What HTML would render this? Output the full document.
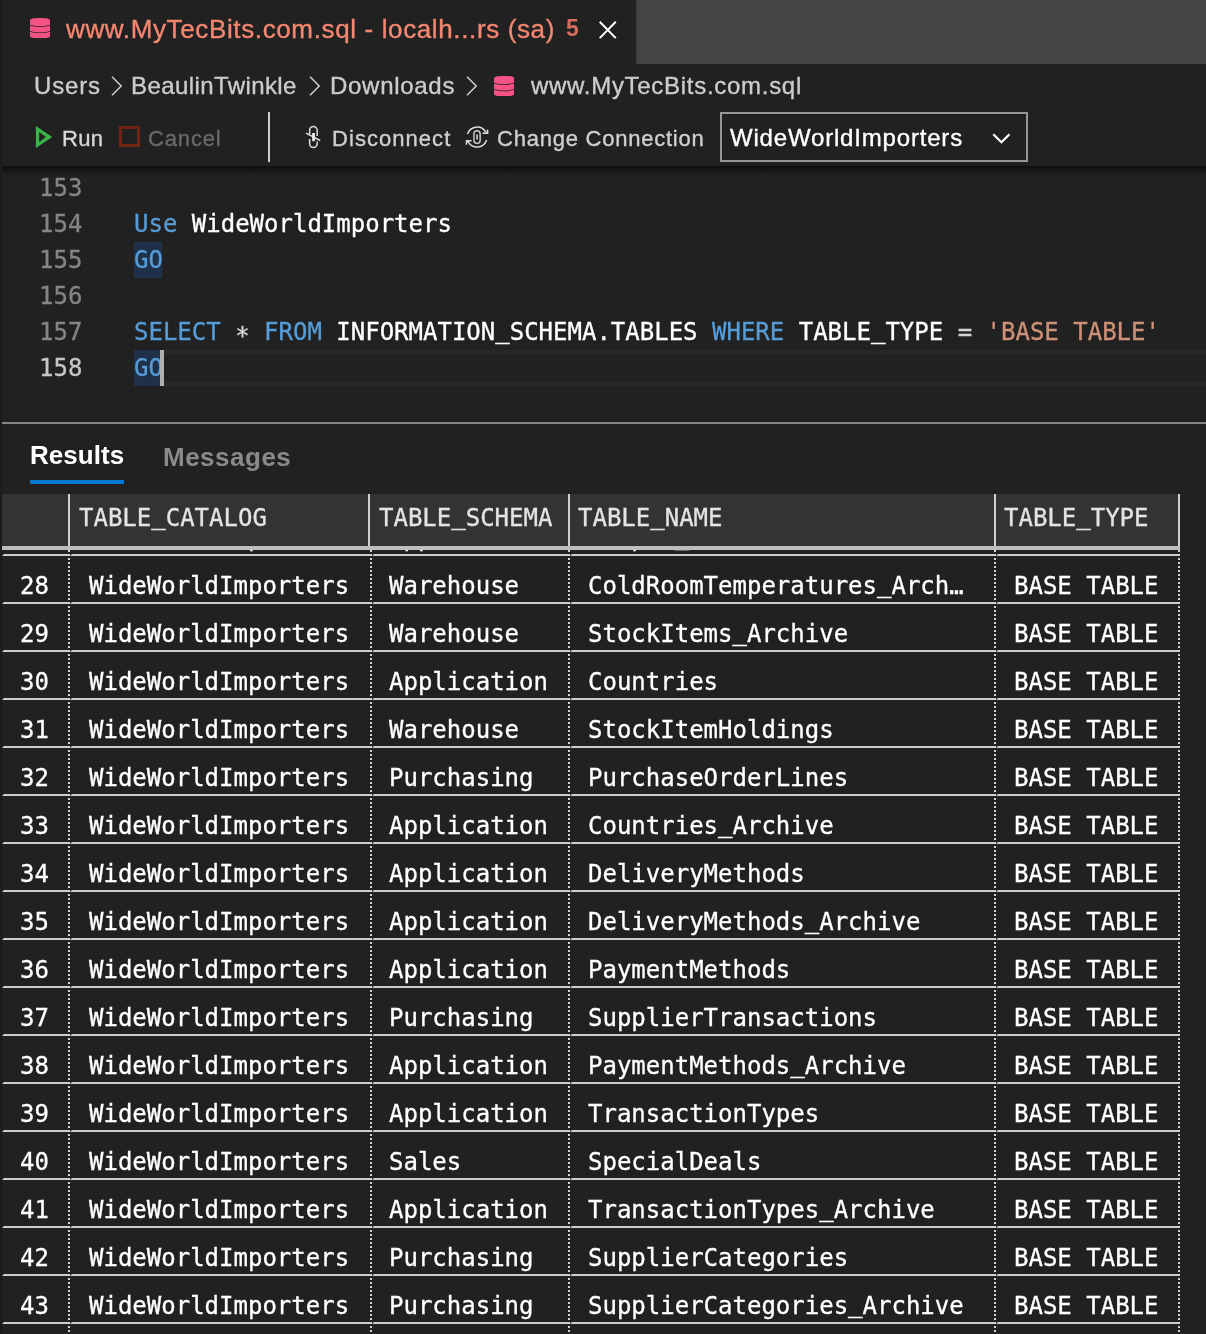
<!DOCTYPE html>
<html lang="en"><head><meta charset="utf-8"><title>www.MyTecBits.com.sql</title>
<style>
*{margin:0;padding:0;box-sizing:border-box}
html,body{width:1206px;height:1334px;overflow:hidden;background:#212121}
body{position:relative;font-family:"Liberation Sans",sans-serif;color:#ccc}
.abs,.t,.m,.dbi,svg.ic{position:absolute}
.t,.m{will-change:transform}
.t{white-space:nowrap;line-height:1;font-family:"Liberation Sans",sans-serif;-webkit-text-stroke:0.35px currentColor}
.m{white-space:nowrap;line-height:1;font-family:"DejaVu Sans Mono","Liberation Mono",monospace;font-size:24px;-webkit-text-stroke:0.3px currentColor}
.u{position:relative;top:-2.5px}
.kw{color:#569cd6}.str{color:#ce9178}.wh{color:#fff}.op{color:#d4d4d4}
.ln{color:#858585}
.grid{position:absolute;left:2px;top:550px;width:1178px;height:784px;overflow:hidden;background:#212121}
.row{position:absolute;left:0;width:1178px;height:48px}
.c{position:absolute;top:0;height:48px;border-left:2px solid transparent;border-bottom:2px solid #cdcdcd;color:#fff}
.dot{position:absolute;top:0;width:2px;height:784px;background:repeating-linear-gradient(to bottom,#d2d2d2 0,#d2d2d2 2px,transparent 2px,transparent 4px)}
.vh{position:absolute;width:2px;background:#cfcfcf}
</style></head><body>

<div class="abs" style="left:0;top:0;width:2px;height:1334px;background:#1c1c1c"></div>
<div class="abs" style="left:636px;top:0;width:570px;height:64px;background:#444444;border-left:2px solid #3f3f3f"></div>
<svg class="dbi" style="left:30px;top:17.8px" width="20" height="20.400" viewBox="0 0 20 20.400"><g fill="#f55385"><path d="M0 2.600C0 0.700 2.600 0 10 0S20 0.700 20 2.600V6.650Q10 9.650 0 6.650Z"/><path d="M0 7.550Q10 10.550 20 7.550V12.950Q10 15.950 0 12.950Z"/><path d="M0 13.850Q10 16.850 20 13.850V17.800C20 19.700 17.400 20.400 10 20.400S0 19.700 0 17.800Z"/></g></svg>
<div class="t" id="tabt" style="left:66.3px;top:15.5px;font-size:26px;color:#f48771;letter-spacing:0.631px">www.MyTecBits.com.sql - localh...rs (sa)</div>
<div class="t" id="five" style="left:566px;top:17px;font-size:23px;font-weight:bold;-webkit-text-stroke:0;color:#d56d5d">5</div>
<svg class="ic" style="left:590px;top:12px" width="36" height="36" viewBox="590 12 36 36"><path d="M599.700 21.700L615.800 38.100M615.800 21.700L599.700 38.100" stroke="#fff" stroke-width="2" fill="none"/></svg>
<div class="t bc" id="bc1" style="left:34.4px;top:74px;font-size:24px;letter-spacing:0.85px;color:#cccccc">Users</div>
<div class="t bc" id="bc2" style="left:131.4px;top:74px;font-size:24px;letter-spacing:0.408px;color:#cccccc">BeaulinTwinkle</div>
<div class="t bc" id="bc3" style="left:329.5px;top:74px;font-size:24px;letter-spacing:0.712px;color:#cccccc">Downloads</div>
<div class="t bc" id="bc4" style="left:531.3px;top:74px;font-size:24px;letter-spacing:0.71px;color:#cccccc">www.MyTecBits.com.sql</div>
<svg class="ic" style="left:107.9px;top:70px" width="20" height="32" viewBox="-4 70 20 32"><path d="M0 76.800L9.200 86L0 95.200" stroke="#cfcfcf" stroke-width="1.500" fill="none"/></svg>
<svg class="ic" style="left:305.9px;top:70px" width="20" height="32" viewBox="-4 70 20 32"><path d="M0 76.800L9.200 86L0 95.200" stroke="#cfcfcf" stroke-width="1.500" fill="none"/></svg>
<svg class="ic" style="left:462.8px;top:70px" width="20" height="32" viewBox="-4 70 20 32"><path d="M0 76.800L9.200 86L0 95.200" stroke="#cfcfcf" stroke-width="1.500" fill="none"/></svg>
<svg class="dbi" style="left:494.2px;top:75.8px" width="20" height="20.400" viewBox="0 0 20 20.400"><g fill="#f55385"><path d="M0 2.600C0 0.700 2.600 0 10 0S20 0.700 20 2.600V6.650Q10 9.650 0 6.650Z"/><path d="M0 7.550Q10 10.550 20 7.550V12.950Q10 15.950 0 12.950Z"/><path d="M0 13.850Q10 16.850 20 13.850V17.800C20 19.700 17.400 20.400 10 20.400S0 19.700 0 17.800Z"/></g></svg>
<svg class="ic" style="left:30px;top:120px" width="30" height="34" viewBox="30 120 30 34"><path fill="#39b54a" fill-rule="evenodd" d="M35.900 126L52.200 137L35.900 148ZM39.200 131.900V141.900L45.900 137Z"/></svg>
<div class="t" id="run" style="left:62px;top:127.8px;font-size:22px;letter-spacing:0.35px;color:#d8d8d8">Run</div>
<div class="abs" style="left:118.500px;top:126px;width:21px;height:21px;border:3px solid #6e2612"></div>
<div class="t" id="cancel" style="left:148px;top:127.8px;font-size:22px;letter-spacing:0.84px;color:#6a6a6a">Cancel</div>
<div class="abs" style="left:268px;top:112px;width:2px;height:50px;background:#cfcfcf"></div>
<svg class="ic" style="left:300px;top:120px" width="28" height="34" viewBox="300 120 28 34"><g fill="none" stroke="#dcdcdc" stroke-width="1.500"><path d="M309.650 134.200V130.300A3.750 3.750 0 0 1 317.150 130.300V136"/><path d="M309.650 139V143.800A3.750 3.750 0 0 0 317.150 143.800V141.500"/><path d="M306 133.200L320.200 140.500"/></g><rect x="312.200" y="133" width="2.700" height="8.200" fill="#f0f0f0"/></svg>
<div class="t" id="disc" style="left:332.4px;top:127.8px;font-size:22px;letter-spacing:1.05px;color:#d0d0d0">Disconnect</div>
<svg class="ic" style="left:460px;top:120px" width="34" height="34" viewBox="460 120 34 34"><g fill="none" stroke="#dcdcdc" stroke-width="1.500"><path d="M467.500 134.100A10 10 0 0 1 485.500 131.750L487.300 133"/><path d="M486.600 140A10 10 0 0 1 468.600 142.350L466.800 141.100"/><path d="M487.600 129.400V133.300H482.500"/><path d="M466.500 144.700V140.800H471.600"/><rect x="473.950" y="130.650" width="6.200" height="12.800" rx="3.100" stroke="#c8c8c8"/><path d="M477.050 134.600V139.500" stroke-width="1.700" stroke="#c8c8c8"/></g></svg>
<div class="t" id="chg" style="left:497px;top:127.8px;font-size:22px;letter-spacing:0.76px;color:#d0d0d0">Change Connection</div>
<div class="abs" style="left:720px;top:112px;width:308px;height:50px;border:2px solid #969696"></div>
<div class="t" id="dd" style="left:730.3px;top:126px;font-size:24px;letter-spacing:0.818px;color:#fff">WideWorldImporters</div>
<svg class="ic" style="left:986px;top:126px" width="32" height="24" viewBox="986 126 32 24"><path d="M993.300 134.200L1001.400 142.300L1009.500 134.200" stroke="#fff" stroke-width="2.200" fill="none"/></svg>
<div class="abs" style="left:2px;top:166px;width:1204px;height:10px;background:linear-gradient(#0e0e0e,rgba(33,33,33,0))"></div>
<div class="abs" style="left:134px;top:242px;width:28px;height:36px;background:#1f3148"></div>
<div class="abs" style="left:134px;top:350px;width:1072px;height:36px;border-top:4px solid #282828;border-bottom:4px solid #282828"></div>
<div class="abs" style="left:134px;top:350px;width:28px;height:36px;background:#1f3148"></div>
<div class="abs" style="left:160px;top:350px;width:4px;height:36px;background:#afafaf;z-index:5"></div>
<div class="m ln" style="left:39px;top:176px">153</div>
<div class="m ln" style="left:39px;top:212px">154</div>
<div class="m" style="left:134px;top:212px;white-space:pre"><span class="kw">Use</span><span class="wh"> WideWorldImporters</span></div>
<div class="m ln" style="left:39px;top:248px">155</div>
<div class="m" style="left:134px;top:248px;white-space:pre"><span class="kw">GO</span></div>
<div class="m ln" style="left:39px;top:284px">156</div>
<div class="m ln" style="left:39px;top:320px">157</div>
<div class="m" style="left:134px;top:320px;white-space:pre"><span class="kw">SELECT</span><span class="op"> <span style="position:relative;top:4px">*</span> </span><span class="kw">FROM</span><span class="wh"> INFORMATION<span class="u">_</span>SCHEMA.TABLES </span><span class="kw">WHERE</span><span class="wh"> TABLE<span class="u">_</span>TYPE </span><span class="op">=</span><span class="wh"> </span><span class="str">'BASE TABLE'</span></div>
<div class="m ln" style="left:39px;top:356px;color:#c6c6c6">158</div>
<div class="m" style="left:134px;top:356px;white-space:pre"><span class="kw">GO</span></div>
<div class="abs" style="left:2px;top:422px;width:1204px;height:2px;background:#858585"></div>
<div class="t" id="res" style="left:30px;top:442.3px;font-size:26px;letter-spacing:0.05px;font-weight:bold;-webkit-text-stroke:0;color:#fff">Results</div>
<div class="t" id="msg" style="left:163px;top:443.7px;font-size:26px;letter-spacing:0.5px;font-weight:bold;-webkit-text-stroke:0;color:#8a8a8a">Messages</div>
<div class="abs" style="left:30px;top:480px;width:94px;height:4px;background:#0078d4"></div>
<div class="abs" style="left:2px;top:494px;width:1178px;height:52px;background:#333"></div>
<div class="vh" style="left:68px;top:494px;height:54px"></div>
<div class="vh" style="left:368px;top:494px;height:54px"></div>
<div class="vh" style="left:568px;top:494px;height:54px"></div>
<div class="vh" style="left:994px;top:494px;height:54px"></div>
<div class="vh" style="left:1178px;top:494px;height:54px"></div>
<div class="abs" style="left:2px;top:546px;width:1178px;height:4px;background:#bdbdbd"></div>
<div class="m" style="left:79px;top:506px;color:#e4e4e4">TABLE<span class="u">_</span>CATALOG</div>
<div class="m" style="left:379px;top:506px;color:#e4e4e4">TABLE<span class="u">_</span>SCHEMA</div>
<div class="m" style="left:578px;top:506px;color:#e4e4e4">TABLE<span class="u">_</span>NAME</div>
<div class="m" style="left:1004px;top:506px;color:#e4e4e4">TABLE<span class="u">_</span>TYPE</div>
<div class="grid">
<div class="row" style="top:-42px">
<div class="c" style="left:0px;width:68px"><span class="m" style="left:16px;top:18px">27</span></div>
<div class="c" style="left:68px;width:302px"><span class="m" style="left:17px;top:18px">WideWorldImporters</span></div>
<div class="c" style="left:370px;width:198px"><span class="m" style="left:15px;top:18px">Application</span></div>
<div class="c" style="left:568px;width:426px"><span class="m" style="left:16px;top:18px">People<span class="u">_</span>Archive</span></div>
<div class="c" style="left:994px;width:184px"><span class="m" style="left:16px;top:18px">BASE TABLE</span></div>
</div>
<div class="row" style="top:6px">
<div class="c" style="left:0px;width:68px"><span class="m" style="left:16px;top:18px">28</span></div>
<div class="c" style="left:68px;width:302px"><span class="m" style="left:17px;top:18px">WideWorldImporters</span></div>
<div class="c" style="left:370px;width:198px"><span class="m" style="left:15px;top:18px">Warehouse</span></div>
<div class="c" style="left:568px;width:426px"><span class="m" style="left:16px;top:18px">ColdRoomTemperatures<span class="u">_</span>Arch…</span></div>
<div class="c" style="left:994px;width:184px"><span class="m" style="left:16px;top:18px">BASE TABLE</span></div>
</div>
<div class="row" style="top:54px">
<div class="c" style="left:0px;width:68px"><span class="m" style="left:16px;top:18px">29</span></div>
<div class="c" style="left:68px;width:302px"><span class="m" style="left:17px;top:18px">WideWorldImporters</span></div>
<div class="c" style="left:370px;width:198px"><span class="m" style="left:15px;top:18px">Warehouse</span></div>
<div class="c" style="left:568px;width:426px"><span class="m" style="left:16px;top:18px">StockItems<span class="u">_</span>Archive</span></div>
<div class="c" style="left:994px;width:184px"><span class="m" style="left:16px;top:18px">BASE TABLE</span></div>
</div>
<div class="row" style="top:102px">
<div class="c" style="left:0px;width:68px"><span class="m" style="left:16px;top:18px">30</span></div>
<div class="c" style="left:68px;width:302px"><span class="m" style="left:17px;top:18px">WideWorldImporters</span></div>
<div class="c" style="left:370px;width:198px"><span class="m" style="left:15px;top:18px">Application</span></div>
<div class="c" style="left:568px;width:426px"><span class="m" style="left:16px;top:18px">Countries</span></div>
<div class="c" style="left:994px;width:184px"><span class="m" style="left:16px;top:18px">BASE TABLE</span></div>
</div>
<div class="row" style="top:150px">
<div class="c" style="left:0px;width:68px"><span class="m" style="left:16px;top:18px">31</span></div>
<div class="c" style="left:68px;width:302px"><span class="m" style="left:17px;top:18px">WideWorldImporters</span></div>
<div class="c" style="left:370px;width:198px"><span class="m" style="left:15px;top:18px">Warehouse</span></div>
<div class="c" style="left:568px;width:426px"><span class="m" style="left:16px;top:18px">StockItemHoldings</span></div>
<div class="c" style="left:994px;width:184px"><span class="m" style="left:16px;top:18px">BASE TABLE</span></div>
</div>
<div class="row" style="top:198px">
<div class="c" style="left:0px;width:68px"><span class="m" style="left:16px;top:18px">32</span></div>
<div class="c" style="left:68px;width:302px"><span class="m" style="left:17px;top:18px">WideWorldImporters</span></div>
<div class="c" style="left:370px;width:198px"><span class="m" style="left:15px;top:18px">Purchasing</span></div>
<div class="c" style="left:568px;width:426px"><span class="m" style="left:16px;top:18px">PurchaseOrderLines</span></div>
<div class="c" style="left:994px;width:184px"><span class="m" style="left:16px;top:18px">BASE TABLE</span></div>
</div>
<div class="row" style="top:246px">
<div class="c" style="left:0px;width:68px"><span class="m" style="left:16px;top:18px">33</span></div>
<div class="c" style="left:68px;width:302px"><span class="m" style="left:17px;top:18px">WideWorldImporters</span></div>
<div class="c" style="left:370px;width:198px"><span class="m" style="left:15px;top:18px">Application</span></div>
<div class="c" style="left:568px;width:426px"><span class="m" style="left:16px;top:18px">Countries<span class="u">_</span>Archive</span></div>
<div class="c" style="left:994px;width:184px"><span class="m" style="left:16px;top:18px">BASE TABLE</span></div>
</div>
<div class="row" style="top:294px">
<div class="c" style="left:0px;width:68px"><span class="m" style="left:16px;top:18px">34</span></div>
<div class="c" style="left:68px;width:302px"><span class="m" style="left:17px;top:18px">WideWorldImporters</span></div>
<div class="c" style="left:370px;width:198px"><span class="m" style="left:15px;top:18px">Application</span></div>
<div class="c" style="left:568px;width:426px"><span class="m" style="left:16px;top:18px">DeliveryMethods</span></div>
<div class="c" style="left:994px;width:184px"><span class="m" style="left:16px;top:18px">BASE TABLE</span></div>
</div>
<div class="row" style="top:342px">
<div class="c" style="left:0px;width:68px"><span class="m" style="left:16px;top:18px">35</span></div>
<div class="c" style="left:68px;width:302px"><span class="m" style="left:17px;top:18px">WideWorldImporters</span></div>
<div class="c" style="left:370px;width:198px"><span class="m" style="left:15px;top:18px">Application</span></div>
<div class="c" style="left:568px;width:426px"><span class="m" style="left:16px;top:18px">DeliveryMethods<span class="u">_</span>Archive</span></div>
<div class="c" style="left:994px;width:184px"><span class="m" style="left:16px;top:18px">BASE TABLE</span></div>
</div>
<div class="row" style="top:390px">
<div class="c" style="left:0px;width:68px"><span class="m" style="left:16px;top:18px">36</span></div>
<div class="c" style="left:68px;width:302px"><span class="m" style="left:17px;top:18px">WideWorldImporters</span></div>
<div class="c" style="left:370px;width:198px"><span class="m" style="left:15px;top:18px">Application</span></div>
<div class="c" style="left:568px;width:426px"><span class="m" style="left:16px;top:18px">PaymentMethods</span></div>
<div class="c" style="left:994px;width:184px"><span class="m" style="left:16px;top:18px">BASE TABLE</span></div>
</div>
<div class="row" style="top:438px">
<div class="c" style="left:0px;width:68px"><span class="m" style="left:16px;top:18px">37</span></div>
<div class="c" style="left:68px;width:302px"><span class="m" style="left:17px;top:18px">WideWorldImporters</span></div>
<div class="c" style="left:370px;width:198px"><span class="m" style="left:15px;top:18px">Purchasing</span></div>
<div class="c" style="left:568px;width:426px"><span class="m" style="left:16px;top:18px">SupplierTransactions</span></div>
<div class="c" style="left:994px;width:184px"><span class="m" style="left:16px;top:18px">BASE TABLE</span></div>
</div>
<div class="row" style="top:486px">
<div class="c" style="left:0px;width:68px"><span class="m" style="left:16px;top:18px">38</span></div>
<div class="c" style="left:68px;width:302px"><span class="m" style="left:17px;top:18px">WideWorldImporters</span></div>
<div class="c" style="left:370px;width:198px"><span class="m" style="left:15px;top:18px">Application</span></div>
<div class="c" style="left:568px;width:426px"><span class="m" style="left:16px;top:18px">PaymentMethods<span class="u">_</span>Archive</span></div>
<div class="c" style="left:994px;width:184px"><span class="m" style="left:16px;top:18px">BASE TABLE</span></div>
</div>
<div class="row" style="top:534px">
<div class="c" style="left:0px;width:68px"><span class="m" style="left:16px;top:18px">39</span></div>
<div class="c" style="left:68px;width:302px"><span class="m" style="left:17px;top:18px">WideWorldImporters</span></div>
<div class="c" style="left:370px;width:198px"><span class="m" style="left:15px;top:18px">Application</span></div>
<div class="c" style="left:568px;width:426px"><span class="m" style="left:16px;top:18px">TransactionTypes</span></div>
<div class="c" style="left:994px;width:184px"><span class="m" style="left:16px;top:18px">BASE TABLE</span></div>
</div>
<div class="row" style="top:582px">
<div class="c" style="left:0px;width:68px"><span class="m" style="left:16px;top:18px">40</span></div>
<div class="c" style="left:68px;width:302px"><span class="m" style="left:17px;top:18px">WideWorldImporters</span></div>
<div class="c" style="left:370px;width:198px"><span class="m" style="left:15px;top:18px">Sales</span></div>
<div class="c" style="left:568px;width:426px"><span class="m" style="left:16px;top:18px">SpecialDeals</span></div>
<div class="c" style="left:994px;width:184px"><span class="m" style="left:16px;top:18px">BASE TABLE</span></div>
</div>
<div class="row" style="top:630px">
<div class="c" style="left:0px;width:68px"><span class="m" style="left:16px;top:18px">41</span></div>
<div class="c" style="left:68px;width:302px"><span class="m" style="left:17px;top:18px">WideWorldImporters</span></div>
<div class="c" style="left:370px;width:198px"><span class="m" style="left:15px;top:18px">Application</span></div>
<div class="c" style="left:568px;width:426px"><span class="m" style="left:16px;top:18px">TransactionTypes<span class="u">_</span>Archive</span></div>
<div class="c" style="left:994px;width:184px"><span class="m" style="left:16px;top:18px">BASE TABLE</span></div>
</div>
<div class="row" style="top:678px">
<div class="c" style="left:0px;width:68px"><span class="m" style="left:16px;top:18px">42</span></div>
<div class="c" style="left:68px;width:302px"><span class="m" style="left:17px;top:18px">WideWorldImporters</span></div>
<div class="c" style="left:370px;width:198px"><span class="m" style="left:15px;top:18px">Purchasing</span></div>
<div class="c" style="left:568px;width:426px"><span class="m" style="left:16px;top:18px">SupplierCategories</span></div>
<div class="c" style="left:994px;width:184px"><span class="m" style="left:16px;top:18px">BASE TABLE</span></div>
</div>
<div class="row" style="top:726px">
<div class="c" style="left:0px;width:68px"><span class="m" style="left:16px;top:18px">43</span></div>
<div class="c" style="left:68px;width:302px"><span class="m" style="left:17px;top:18px">WideWorldImporters</span></div>
<div class="c" style="left:370px;width:198px"><span class="m" style="left:15px;top:18px">Purchasing</span></div>
<div class="c" style="left:568px;width:426px"><span class="m" style="left:16px;top:18px">SupplierCategories<span class="u">_</span>Archive</span></div>
<div class="c" style="left:994px;width:184px"><span class="m" style="left:16px;top:18px">BASE TABLE</span></div>
</div>
<div class="row" style="top:774px">
<div class="c" style="left:0px;width:68px"><span class="m" style="left:16px;top:18px">44</span></div>
<div class="c" style="left:68px;width:302px"><span class="m" style="left:17px;top:18px">WideWorldImporters</span></div>
<div class="c" style="left:370px;width:198px"><span class="m" style="left:15px;top:18px">Sales</span></div>
<div class="c" style="left:568px;width:426px"><span class="m" style="left:16px;top:18px">SpecialDeals<span class="u">_</span>Archive</span></div>
<div class="c" style="left:994px;width:184px"><span class="m" style="left:16px;top:18px">BASE TABLE</span></div>
</div>
<div class="dot" style="left:66px"></div>
<div class="dot" style="left:368px"></div>
<div class="dot" style="left:566px"></div>
<div class="dot" style="left:992px"></div>
<div class="dot" style="left:1176px"></div>
</div>
</body></html>
